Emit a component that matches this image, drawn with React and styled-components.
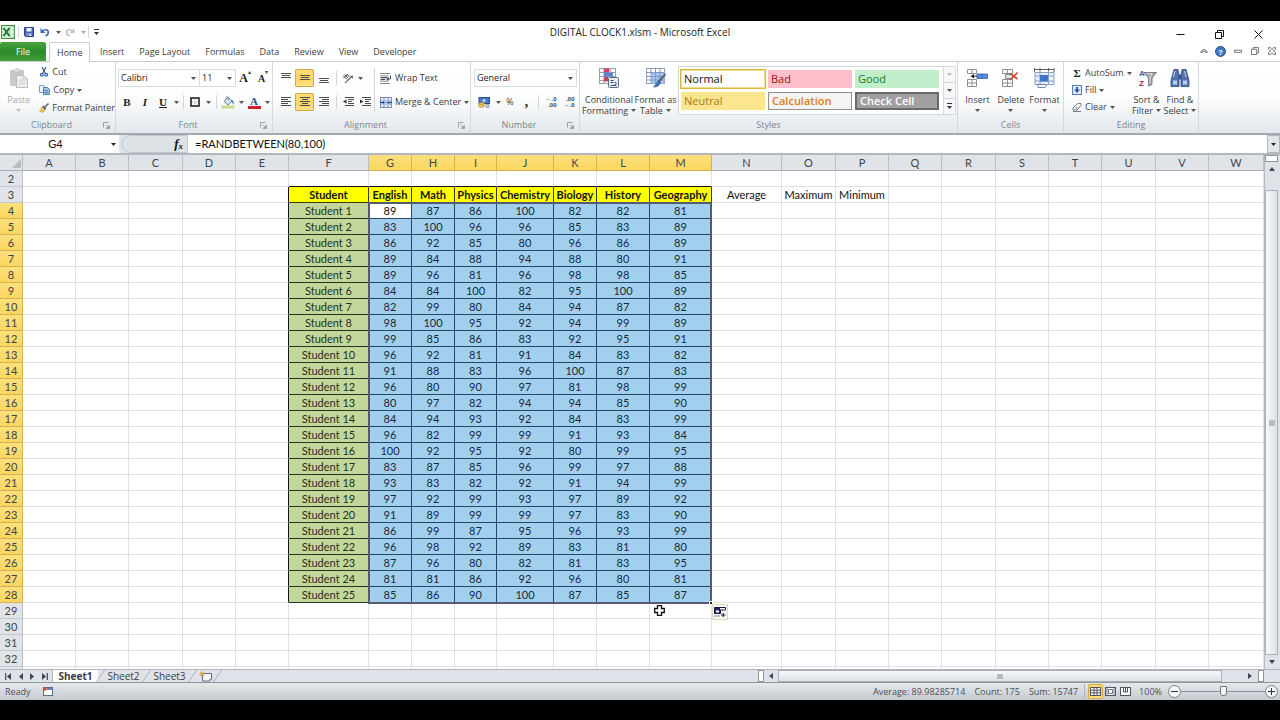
import { Fragment, useState } from "react";
import styled, { createGlobalStyle, css } from "styled-components";

const UI_FONT = '"Open Sans", "Noto Sans", sans-serif';
const CELL_FONT = 'Lato, "Liberation Sans", sans-serif';

const MENU_TABS = [
  "Insert",
  "Page Layout",
  "Formulas",
  "Data",
  "Review",
  "View",
  "Developer",
];

// the last column has no width, it takes what is left of the window
const COLUMNS = [
  ["A", 53],
  ["B", 53],
  ["C", 54],
  ["D", 53],
  ["E", 53],
  ["F", 80],
  ["G", 43],
  ["H", 43],
  ["I", 42],
  ["J", 57],
  ["K", 43],
  ["L", 53],
  ["M", 62],
  ["N", 70],
  ["O", 54],
  ["P", 53],
  ["Q", 53],
  ["R", 54],
  ["S", 53],
  ["T", 53],
  ["U", 54],
  ["V", 53],
  ["W", null],
];

const SUBJECTS = [
  "Student",
  "English",
  "Math",
  "Physics",
  "Chemistry",
  "Biology",
  "History",
  "Geography",
];

const SCORES = [
  [89, 87, 86, 100, 82, 82, 81],
  [83, 100, 96, 96, 85, 83, 89],
  [86, 92, 85, 80, 96, 86, 89],
  [89, 84, 88, 94, 88, 80, 91],
  [89, 96, 81, 96, 98, 98, 85],
  [84, 84, 100, 82, 95, 100, 89],
  [82, 99, 80, 84, 94, 87, 82],
  [98, 100, 95, 92, 94, 99, 89],
  [99, 85, 86, 83, 92, 95, 91],
  [96, 92, 81, 91, 84, 83, 82],
  [91, 88, 83, 96, 100, 87, 83],
  [96, 80, 90, 97, 81, 98, 99],
  [80, 97, 82, 94, 94, 85, 90],
  [84, 94, 93, 92, 84, 83, 99],
  [96, 82, 99, 99, 91, 93, 84],
  [100, 92, 95, 92, 80, 99, 95],
  [83, 87, 85, 96, 99, 97, 88],
  [93, 83, 82, 92, 91, 94, 99],
  [97, 92, 99, 93, 97, 89, 92],
  [91, 89, 99, 99, 97, 83, 90],
  [86, 99, 87, 95, 96, 93, 99],
  [96, 98, 92, 89, 83, 81, 80],
  [87, 96, 80, 82, 81, 83, 95],
  [81, 81, 86, 92, 96, 80, 81],
  [85, 86, 90, 100, 87, 85, 87],
];

const EXTRA_HEADERS = { 13: "Average", 14: "Maximum", 15: "Minimum" };
const ROWS = Array.from({ length: 32 }, (_, i) => i + 2);

const getCell = (row, col) => {
  if (row === 3) {
    if (col >= 5 && col <= 12) return { kind: "head", text: SUBJECTS[col - 5] };
    return { kind: col === 4 ? "edge" : "plain", text: EXTRA_HEADERS[col] };
  }
  if (row >= 4 && row <= 28) {
    if (col === 5) return { kind: "student", text: `Student ${row - 3}` };
    if (col >= 6 && col <= 12)
      return {
        kind: row === 4 && col === 6 ? "active" : "score",
        text: SCORES[row - 4][col - 6],
      };
    if (col === 4) return { kind: "edge" };
  }
  if (row === 2 && col >= 5 && col <= 12) return { kind: "above" };
  return { kind: "plain" };
};

/* ---------- icons ---------- */

const Caret = ({ color = "#555" }) => (
  <svg width="5" height="3" viewBox="0 0 5 3">
    <path d="M0 0h5L2.5 3z" fill={color} />
  </svg>
);

const ExcelIcon = () => (
  <svg width="14" height="14" viewBox="0 0 14 14">
    <rect x=".5" y=".5" width="13" height="13" fill="#d5edcf" stroke="#3d9140" />
    <path d="M9 2h4v10H9z" fill="#fff" stroke="#7db87c" strokeWidth=".6" />
    <path d="M9.5 4.5H13M9.5 7H13M9.5 9.500H13" stroke="#7db87c" strokeWidth=".6" />
    <path d="M2.500 3l6 8M8.500 3l-6 8" stroke="#1f7a2d" strokeWidth="2" />
  </svg>
);

const SaveIcon = () => (
  <svg width="10" height="10" viewBox="0 0 10 10">
    <path d="M.5.5h9v9h-8l-1-1z" fill="#4a63b5" stroke="#2f4290" />
    <path d="M2.500 1h5v3.500h-5z" fill="#eef2fb" />
    <path d="M2.500 6.500h5V9h-5z" fill="#c9d3ea" />
    <path d="M3.500 7h1v2h-1z" fill="#2f4290" />
  </svg>
);

const UndoIcon = ({ flip, color }) => (
  <svg width="10" height="10" viewBox="0 0 10 10">
    <g transform={flip ? "matrix(-1 0 0 1 10 0)" : undefined}>
      <path d="M2 4.500C4.500 2 8.300 2.200 8.300 5.200 8.300 7.200 6.800 8.400 5.500 9" fill="none" stroke={color} strokeWidth="1.600" />
      <path d="M.5 1v5h5z" fill={color} />
    </g>
  </svg>
);

const CustomizeIcon = () => (
  <svg width="5" height="6" viewBox="0 0 5 6">
    <path d="M0 .5h5" stroke="#333" />
    <path d="M0 3h5L2.500 6z" fill="#333" />
  </svg>
);

const LauncherIcon = () => (
  <svg width="7" height="7" viewBox="0 0 7 7">
    <path d="M.5 5.500v-5h5" fill="none" stroke="#9aa1a9" />
    <path d="M6.500 3v3.500H3zM2.500 2.500l3 3" fill="#9aa1a9" stroke="#9aa1a9" strokeWidth=".8" />
  </svg>
);

const PasteIcon = () => (
  <svg width="20" height="20" viewBox="0 0 20 20">
    <rect x="1" y="2" width="14" height="16" rx="1" fill="#c9c9c9" />
    <path d="M4 4V2h2.500a1.500 1.500 0 013 0H12v2z" fill="#e5e5e5" stroke="#b0b0b0" strokeWidth=".7" />
    <path d="M7.500 7.500h7l4 3.500v8.500h-11z" fill="#efefef" stroke="#bcbcbc" />
    <path d="M14.500 7.500V11h4M9.500 12h7M9.500 14h7M9.500 16h7" fill="none" stroke="#c8c8c8" strokeWidth=".8" />
  </svg>
);

const CutIcon = () => (
  <svg width="10" height="10" viewBox="0 0 10 10">
    <path d="M3 0l3.500 6.500M7 0L3.500 6.500" stroke="#44597f" strokeWidth="1.200" />
    <circle cx="2.800" cy="7.800" r="1.400" fill="none" stroke="#2f62b5" strokeWidth="1.200" />
    <circle cx="7.200" cy="7.800" r="1.400" fill="none" stroke="#2f62b5" strokeWidth="1.200" />
  </svg>
);

const CopyIcon = () => (
  <svg width="11" height="10" viewBox="0 0 11 10">
    <path d="M.5.5h4l1.500 1.500v5.500H.5z" fill="#e9f0fb" stroke="#6f8fc4" strokeWidth=".9" />
    <path d="M4.500 2.500h4l2 2v5h-6z" fill="#a9c2ee" stroke="#4d70b4" strokeWidth=".9" />
    <path d="M5.500 5.500h3M5.500 7.500h4" stroke="#3c5fa6" strokeWidth=".8" />
  </svg>
);

const PainterIcon = () => (
  <svg width="10" height="10" viewBox="0 0 10 10">
    <path d="M9.500.5L6 4" stroke="#6a6a6a" strokeWidth="1.600" />
    <path d="M4.500 2.500l3 3-1.500 1.500-3-3z" fill="#555e74" />
    <path d="M3 4l3 3-2 2.500L.5 8C2 7 2 5.500 3 4z" fill="#efc964" stroke="#b08b30" strokeWidth=".6" />
  </svg>
);

const BordersIcon = () => (
  <svg width="10" height="10" viewBox="0 0 10 10">
    <rect x="1" y="1" width="8" height="8" fill="#fff" stroke="#222" strokeWidth="1.600" />
    <path d="M5 2v6M2 5h6" stroke="#aaa" strokeDasharray="1 1" />
  </svg>
);

const FillColorIcon = () => (
  <svg width="14" height="13" viewBox="0 0 14 13">
    <path d="M3 5.500L7 1.500l4 3.500-4 4z" fill="#dbe3ee" stroke="#63738b" strokeWidth=".9" />
    <path d="M5 4V1.500a1.300 1.300 0 012.500 0V4" fill="none" stroke="#63738b" strokeWidth=".8" />
    <path d="M11 4c2 1 2 3 1.500 4.500C11.500 7.500 11.500 6 10 5z" fill="#3b73c4" />
    <path d="M.5 9.500h13v3H.5z" fill="#c8dc8a" />
  </svg>
);

const Lines = ({ widths, align = "center", top = 0 }) => (
  <svg width="10" height="10" viewBox="0 0 10 10">
    {widths.map((w, i) => {
      const x = align === "left" ? 0 : align === "right" ? 10 - w : (10 - w) / 2;
      return (
        <rect key={i} x={x} y={top + i * 2} width={w} height="1" fill="#4c4c4c" />
      );
    })}
  </svg>
);

const OrientationIcon = () => (
  <svg width="12" height="11" viewBox="0 0 12 11">
    <path d="M1 2.500l4 4M2.500 1.500l4 4M4.500 1l3 3M1.500 5l4-3.500" stroke="#555" strokeWidth="1" />
    <path d="M3 10l7-6.500" stroke="#777" strokeWidth="1.200" />
    <path d="M11 2.500v3.500L7.500 3z" fill="#777" />
  </svg>
);

const IndentIcon = ({ right }) => (
  <svg width="11" height="10" viewBox="0 0 11 10">
    <path d="M2 .5h9M5 2.500h6M5 4.500h4M5 6.500h6M2 8.500h9" stroke="#4c4c4c" />
    <path d={right ? "M0 2.500v4l3.500-2z" : "M3.500 2.500v4L0 4.500z"} fill="#333" />
  </svg>
);

const WrapIcon = () => (
  <svg width="12" height="11" viewBox="0 0 12 11">
    <path d="M0 .5h10M0 10.500h10" stroke="#8b8b8b" />
    <path d="M0 2.500h8v6H0z" fill="#d2d9e3" stroke="#8e959f" strokeWidth=".6" />
    <path d="M1 4.500h6M1 6.500h4" stroke="#444" />
    <path d="M10.500 2.500V6H8" fill="none" stroke="#555" />
    <path d="M8.500 4v4L6.500 6z" fill="#444" />
  </svg>
);

const MergeIcon = () => (
  <svg width="12" height="11" viewBox="0 0 12 11">
    <rect x=".5" y=".5" width="11" height="10" fill="#e8eefa" stroke="#7c8db0" />
    <path d="M4 .5V3M8 .5V3M4 8v2.500M8 8v2.500" stroke="#7c8db0" />
    <rect x="1" y="3" width="10" height="5" fill="#a9c3ee" />
    <path d="M0 5.500h3.500M8.500 5.500H12" stroke="#24457f" />
    <path d="M3 4v3l2-1.500zM9 4v3L7 5.500z" fill="#24457f" />
  </svg>
);

const CurrencyIcon = () => (
  <svg width="12" height="11" viewBox="0 0 12 11">
    <rect x="1" y=".5" width="10.500" height="6" fill="#4f78c2" stroke="#2b4c90" />
    <circle cx="6" cy="3.500" r="1.600" fill="#c6d6f2" />
    <ellipse cx="3.500" cy="7" rx="3" ry="1.300" fill="#f1cf62" stroke="#a98321" strokeWidth=".6" />
    <ellipse cx="3.500" cy="9" rx="3" ry="1.300" fill="#f1cf62" stroke="#a98321" strokeWidth=".6" />
    <path d="M8 7.500h3v3H8z" fill="#cfd8e8" stroke="#66779b" strokeWidth=".6" />
  </svg>
);

const ConditionalIcon = () => (
  <svg width="20" height="20" viewBox="0 0 20 20">
    <rect x=".5" y=".5" width="16" height="15" fill="#fff" stroke="#8fa0bb" />
    <path d="M.5 4.500h16M.5 8.500h16M.5 12.500h16M5 .5v15M11.500.5v15" stroke="#8fa0bb" />
    <path d="M5 .5h5v4H5zM5 8.500h4v5H5z" fill="#d2405c" />
    <path d="M5 4.500h9v4H5z" fill="#5b83cf" />
    <path d="M10 .5h1.500v4H10z" fill="#f3b5c0" />
    <rect x="9.500" y="9.500" width="10" height="10" rx="1" fill="#e9edf5" stroke="#5e6c87" />
    <path d="M11.500 12.500h3M11.500 14.500h3M15.500 14l2 1.500-2 1.500M11.500 17.500h6" fill="none" stroke="#3c4a66" />
  </svg>
);

const FormatTableIcon = () => (
  <svg width="20" height="20" viewBox="0 0 20 20">
    <rect x=".5" y=".5" width="18" height="15" fill="#fff" stroke="#8fa0bb" />
    <path d="M5 4.500h13.500v11H5z" fill="#a8c4f0" />
    <path d="M.5 4.500h18M.5 8.500h18M.5 12h18M5 .5v15M9.500.5v15M14 .5v15" stroke="#7f98c4" />
    <path d="M19.500 6L12 14.500" stroke="#5c6470" strokeWidth="2" />
    <path d="M12.500 12.500l2 2c-1 3-3 4.500-7 4.500 2.500-1.500 2-4 5-6.500z" fill="#4173bd" stroke="#2b528f" strokeWidth=".6" />
  </svg>
);

const InsertIcon = () => (
  <svg width="21" height="20" viewBox="0 0 21 20">
    <path d="M.5 1.500h9v4h-9zM5 1.500v4M.5 11.500h9v7h-9zM5 11.500v7M.5 15h9" fill="#fff" stroke="#8a8f98" />
    <path d="M10 6h10.500v4.500H10z" fill="#5b8ae0" stroke="#3358a6" strokeWidth=".8" />
    <path d="M15 6v4.500" stroke="#3358a6" strokeWidth=".6" />
    <path d="M5 8.200h5" stroke="#222" />
    <path d="M3.500 8.200L7 6v4.400z" fill="#222" />
  </svg>
);

const DeleteIcon = () => (
  <svg width="20" height="20" viewBox="0 0 20 20">
    <path d="M1.500 1.500h10v4h-10zM6.500 1.500v4M1.500 11.500h10v7h-10zM6.500 11.500v7M1.500 15h10" fill="#fff" stroke="#8a8f98" />
    <path d="M4.500 6.500h7v4h-7z" fill="#dfe4ec" stroke="#8a8f98" />
    <path d="M9 5.500l7.500 5.500M16.500 4.500L9 12" stroke="#cf4b32" strokeWidth="1.700" />
  </svg>
);

const FormatIcon = () => (
  <svg width="21" height="20" viewBox="0 0 21 20">
    <path d="M.5 0v4M20 0v4M1 1.500h19M6 0v3.500M14.500 0v3.500" stroke="#5b6470" />
    <path d="M1 4.500h19v12H1z" fill="#e7effb" stroke="#8aa0c4" />
    <path d="M6 4.500v12M14.500 4.500v12M1 8h19M1 13h19" stroke="#8aa0c4" />
    <path d="M6 7h8v6.500H6z" fill="#3f74c8" />
    <path d="M4 16.500h7l1.500 1.500L11 19.500H4z" fill="#fff" stroke="#6a86b8" />
  </svg>
);

const FillIcon = () => (
  <svg width="10" height="10" viewBox="0 0 10 10">
    <rect x=".5" y=".5" width="9" height="9" fill="#dfe9fa" stroke="#5a7dbd" />
    <path d="M4 2h2v2.500h2L5 8 2 4.500h2z" fill="#2a5bb0" />
  </svg>
);

const ClearIcon = () => (
  <svg width="10" height="10" viewBox="0 0 10 10">
    <path d="M1 6l4.500-4.500h3.500v2L5 8H1z" fill="#f2f4f8" stroke="#68707f" strokeWidth=".9" />
    <path d="M4 5l1.500 2.500M1 9.500h8" stroke="#68707f" strokeWidth=".9" />
  </svg>
);

const SortIcon = () => (
  <svg width="20" height="20" viewBox="0 0 20 20">
    <path d="M7 4.500h12.500L15 10v6.500L11.500 18v-8z" fill="#a3a8ae" stroke="#666c74" strokeWidth=".8" />
    <path d="M10 5.500h5L13 9.500v6" fill="none" stroke="#dcdfe3" />
    <text x="2" y="8" fontFamily="Liberation Sans, sans-serif" fontWeight="700" fontSize="8" fill="#3a62ad">A</text>
    <text x="2" y="18" fontFamily="Liberation Sans, sans-serif" fontWeight="700" fontSize="8" fill="#a3293a">Z</text>
  </svg>
);

const FindIcon = () => (
  <svg width="20" height="20" viewBox="0 0 20 20">
    <path d="M4 1.500h4l1 5v12H1v-6z" fill="#5273ae" stroke="#2c4479" strokeWidth=".8" />
    <path d="M12 1.500h4l3 11v6h-8v-12z" fill="#5273ae" stroke="#2c4479" strokeWidth=".8" />
    <path d="M8.500 6.500h3v5h-3z" fill="#3b568f" />
    <path d="M3 12.500h4v4H3zM13 12.500h4v4h-4z" fill="#b9cdef" />
    <path d="M5 3L3.500 9M14.500 3l1.500 6" stroke="#c4d3ee" />
  </svg>
);

const FrameIcon = ({ name, size = 9, color = "#666" }) => {
  const paths = {
    min: "M.5 4.500h8",
    restore: "M.5 2.500h6v6h-6zM2.500 2.500v-2h6v6h-2",
    close: "M.5.5l8 8M8.500.5l-8 8",
    up: "M1 5l3.500-2.500L8 5v1.500L4.500 4.500 1 6.500z",
    bar: "M.5 3.500h8v2.500h-8z",
    cross: "M.5.5h2l2 2.500 2-2.500h2v2L6 4.500l2.500 2v2h-2l-2-2-2 2h-2v-2l2.500-2-2.500-2z",
  };
  return (
    <svg width={size} height={size} viewBox="0 0 9 9">
      <path d={paths[name]} fill="none" stroke={color} strokeWidth="1" />
    </svg>
  );
};

const HelpIcon = () => (
  <svg width="11" height="11" viewBox="0 0 11 11">
    <circle cx="5.500" cy="5.500" r="5" fill="#3d74c4" stroke="#2a569b" />
    <text x="5.500" y="8.500" textAnchor="middle" fontFamily="Liberation Sans, sans-serif" fontWeight="700" fontSize="8" fill="#fff">?</text>
  </svg>
);

const NavIcon = ({ dir, stop }) => (
  <svg width="7" height="7" viewBox="0 0 7 7">
    <g transform={dir === "left" ? "matrix(-1 0 0 1 7 0)" : undefined}>
      <path d="M1 0v7l4-3.500z" fill="#3f4650" />
      {stop ? <path d="M6.300 0v7" stroke="#3f4650" strokeWidth="1.200" /> : null}
    </g>
  </svg>
);

const ArrowIcon = ({ dir }) => {
  const turn = { up: 0, right: 90, down: 180, left: 270 }[dir];
  return (
    <svg width="8" height="8" viewBox="0 0 8 8">
      <path d="M1 6h6L4 2z" fill="#3f4650" transform={`rotate(${turn} 4 4)`} />
    </svg>
  );
};

const NewSheetIcon = () => (
  <svg width="13" height="11" viewBox="0 0 13 11">
    <path d="M3.500 2.500h9v5.500l-2 2h-7z" fill="#f4f7fc" stroke="#5b6d93" />
    <path d="M12.500 8h-2v2z" fill="#5b6d93" />
    <path d="M3 0v6M0 3h6M1 1l4 4M5 1L1 5" stroke="#d8a53a" strokeWidth=".9" />
  </svg>
);

const MacroIcon = () => (
  <svg width="10" height="9" viewBox="0 0 10 9">
    <rect x=".5" y=".5" width="9" height="8" fill="#fff" stroke="#5d6b91" />
    <path d="M4 1h5.500v2H4z" fill="#6b83bd" />
    <circle cx="2" cy="2" r="1.800" fill="#c94545" />
  </svg>
);

const ViewIcon = ({ name }) => (
  <svg width="11" height="9" viewBox="0 0 11 9">
    <rect x=".5" y=".5" width="10" height="8" fill="#fff" stroke="#4f5660" />
    {name === "normal" ? (
      <path d="M.5 3.200h10M.5 5.800h10M4 .5v8M7 .5v8" stroke="#4f5660" />
    ) : null}
    {name === "page" ? (
      <path d="M3.500 2.500h4v4h-4zM2 .5v8M9 .5v8" fill="none" stroke="#6d747e" />
    ) : null}
    {name === "break" ? (
      <path d="M3.500.5V5h4V.5M5.500.5V5" fill="none" stroke="#4f5660" />
    ) : null}
  </svg>
);

const AutoFillIcon = () => (
  <svg width="12" height="12" viewBox="0 0 12 12">
    <path d="M.5 1.500h6v6h-6z" fill="#26266e" stroke="#15154d" />
    <path d="M2 4.500h3v2H2z" fill="#fff" />
    <path d="M5.500 1.500h6v2.500h-6z" fill="#fff" stroke="#15154d" />
    <path d="M.5 10h6" stroke="#15154d" strokeDasharray="1 1" />
    <path d="M7 9h4.500M9.200 6.800v4.400" stroke="#15154d" />
  </svg>
);

const CrossCursor = () => (
  <svg width="11" height="11" viewBox="0 0 11 11">
    <path d="M3.500.700h4v2.800h2.800v4H7.500v2.800h-4V7.500H.700v-4h2.800z" fill="#fff" stroke="#111" strokeWidth="1.300" />
  </svg>
);

/* ---------- parts ---------- */

const BigTool = ({ icon, lines, width, muted, caretBelow }) => (
  <BigButton $width={width} $muted={muted}>
    {icon}
    <BigLabel>
      {lines.map((line, i) => (
        <BigLine key={line}>
          {line}
          {!caretBelow && i === lines.length - 1 ? <Caret /> : null}
        </BigLine>
      ))}
      {caretBelow ? (
        <BigLine>
          <Caret color={muted ? "#bbb" : "#555"} />
        </BigLine>
      ) : null}
    </BigLabel>
  </BigButton>
);

const Combo = ({ label, value, width }) => (
  <ComboBox $width={width}>
    <select aria-label={label} defaultValue={value}>
      <option>{value}</option>
    </select>
    <Caret />
  </ComboBox>
);

const Group = ({ title, width, launcher, pad, children }) => (
  <GroupBox $width={width}>
    <GroupBody $pad={pad}>{children}</GroupBody>
    <GroupTitle>
      <span>{title}</span>
      {launcher ? (
        <Launcher aria-label={`${title} settings`}>
          <LauncherIcon />
        </Launcher>
      ) : null}
    </GroupTitle>
  </GroupBox>
);

const TitleBar = () => (
  <TitleRow>
    <QuickAccess>
      <ExcelIcon />
      <Divider $h={12} $mx={3} />
      <Tool $w={14} aria-label="Save">
        <SaveIcon />
      </Tool>
      <Tool $w={18} aria-label="Undo">
        <UndoIcon color="#3c6db8" />
      </Tool>
      <Tool $w={8} aria-label="Undo list">
        <Caret />
      </Tool>
      <Tool $w={16} aria-label="Redo">
        <UndoIcon flip color="#bfc3c9" />
      </Tool>
      <Tool $w={10} aria-label="Redo list">
        <Caret color="#aaa" />
      </Tool>
      <Divider $h={12} $mx={0} />
      <Tool $w={14} aria-label="Customize toolbar">
        <CustomizeIcon />
      </Tool>
    </QuickAccess>
    <WindowTitle>DIGITAL CLOCK1.xlsm - Microsoft Excel</WindowTitle>
    <WindowButtons>
      <Tool $w={39} aria-label="Minimize">
        <FrameIcon name="min" color="#111" />
      </Tool>
      <Tool $w={39} aria-label="Restore">
        <FrameIcon name="restore" color="#111" />
      </Tool>
      <Tool $w={39} aria-label="Close">
        <FrameIcon name="close" color="#111" />
      </Tool>
    </WindowButtons>
  </TitleRow>
);

const MenuBar = () => (
  <MenuRow>
    <FileTab>File</FileTab>
    <HomeTab>Home</HomeTab>
    {MENU_TABS.map((tab) => (
      <MenuTab key={tab}>{tab}</MenuTab>
    ))}
    <BookButtons>
      <Tool $w={17} aria-label="Collapse ribbon">
        <FrameIcon name="up" size={8} />
      </Tool>
      <Tool $w={17} aria-label="Help">
        <HelpIcon />
      </Tool>
      <Tool $w={17} aria-label="Minimize workbook">
        <FrameIcon name="bar" size={8} />
      </Tool>
      <Tool $w={17} aria-label="Restore workbook">
        <FrameIcon name="restore" size={8} />
      </Tool>
      <Tool $w={17} aria-label="Close workbook">
        <FrameIcon name="cross" size={8} />
      </Tool>
    </BookButtons>
  </MenuRow>
);

const Ribbon = () => (
  <RibbonRow>
    <Group title="Clipboard" width={116} launcher>
      <BigTool icon={<PasteIcon />} lines={["Paste"]} width={38} muted caretBelow />
      <Stack $row={18}>
        <SmallTool>
          <CutIcon />
          Cut
        </SmallTool>
        <SmallTool>
          <CopyIcon />
          Copy <Caret />
        </SmallTool>
        <SmallTool>
          <PainterIcon />
          Format Painter
        </SmallTool>
      </Stack>
    </Group>

    <Group title="Font" width={157} launcher pad={2}>
      <Stack $row={24}>
        <ToolRow>
          <Combo label="Font" value="Calibri" width={82} />
          <Combo label="Font size" value="11" width={36} />
          <Tool $w={18} aria-label="Grow font">
            <Letter $size={12}>A</Letter>
            <Mark>▴</Mark>
          </Tool>
          <Tool $w={18} aria-label="Shrink font">
            <Letter $size={10}>A</Letter>
            <Mark>▾</Mark>
          </Tool>
        </ToolRow>
        <ToolRow>
          <Tool $w={18} aria-label="Bold">
            <Letter>B</Letter>
          </Tool>
          <Tool $w={18} aria-label="Italic">
            <Letter $italic>I</Letter>
          </Tool>
          <Tool $w={18} aria-label="Underline">
            <Letter $underline>U</Letter>
          </Tool>
          <Tool $w={8} aria-label="Underline style">
            <Caret />
          </Tool>
          <Divider $h={14} $mx={3} />
          <Tool $w={16} aria-label="Borders">
            <BordersIcon />
          </Tool>
          <Tool $w={10} aria-label="Border styles">
            <Caret />
          </Tool>
          <Divider $h={14} $mx={3} />
          <Tool $w={16} aria-label="Fill color">
            <FillColorIcon />
          </Tool>
          <Tool $w={10} aria-label="Fill colors">
            <Caret />
          </Tool>
          <Tool $w={16} aria-label="Font color">
            <ColorLetter>A</ColorLetter>
          </Tool>
          <Tool $w={10} aria-label="Font colors">
            <Caret />
          </Tool>
        </ToolRow>
      </Stack>
    </Group>

    <Group title="Alignment" width={198} launcher pad={3}>
      <Stack $row={24}>
        <ToolRow>
          <Tool $w={19} aria-label="Top align">
            <Lines widths={[10, 8, 10]} />
          </Tool>
          <Tool $w={19} $on aria-label="Middle align">
            <Lines widths={[10, 8, 10]} top={2} />
          </Tool>
          <Tool $w={19} aria-label="Bottom align">
            <Lines widths={[10, 8, 10]} top={5} />
          </Tool>
          <Divider $h={14} $mx={3} />
          <Tool $w={16} aria-label="Orientation">
            <OrientationIcon />
          </Tool>
          <Tool $w={8} aria-label="Orientation list">
            <Caret />
          </Tool>
        </ToolRow>
        <ToolRow>
          <Tool $w={19} aria-label="Align left">
            <Lines widths={[10, 7, 10, 7, 10]} align="left" />
          </Tool>
          <Tool $w={19} $on aria-label="Center">
            <Lines widths={[10, 6, 10, 6, 10]} />
          </Tool>
          <Tool $w={19} aria-label="Align right">
            <Lines widths={[10, 7, 10, 7, 10]} align="right" />
          </Tool>
          <Divider $h={14} $mx={3} />
          <Tool $w={17} aria-label="Decrease indent">
            <IndentIcon />
          </Tool>
          <Tool $w={17} aria-label="Increase indent">
            <IndentIcon right />
          </Tool>
        </ToolRow>
      </Stack>
      <Divider $h={44} $mx={0} />
      <Stack $row={24}>
        <SmallTool $pad={5}>
          <WrapIcon />
          Wrap Text
        </SmallTool>
        <SmallTool $pad={5}>
          <MergeIcon />
          Merge &amp; Center <Caret />
        </SmallTool>
      </Stack>
    </Group>

    <Group title="Number" width={109} launcher pad={3}>
      <Stack $row={24}>
        <ToolRow>
          <Combo label="Number format" value="General" width={103} />
        </ToolRow>
        <ToolRow>
          <Tool $w={20} aria-label="Accounting format">
            <CurrencyIcon />
          </Tool>
          <Tool $w={8} aria-label="Currencies">
            <Caret />
          </Tool>
          <Tool $w={16} aria-label="Percent">
            %
          </Tool>
          <Tool $w={17} aria-label="Comma style">
            <Letter $size={14}>,</Letter>
          </Tool>
          <Divider $h={14} $mx={3} />
          <Tool $w={18} aria-label="Increase decimal">
            <Decimals>
              <span>←.0</span>
              <span>.00</span>
            </Decimals>
          </Tool>
          <Tool $w={18} aria-label="Decrease decimal">
            <Decimals>
              <span>.00</span>
              <span>→.0</span>
            </Decimals>
          </Tool>
        </ToolRow>
      </Stack>
    </Group>

    <Group title="Styles" width={378} pad={5}>
      <BigTool
        icon={<ConditionalIcon />}
        lines={["Conditional", "Formatting"]}
        width={48}
      />
      <BigTool
        icon={<FormatTableIcon />}
        lines={["Format as", "Table"]}
        width={45}
      />
      <Gallery>
        <StyleGrid>
          <StyleItem $kind="normal">Normal</StyleItem>
          <StyleItem $kind="bad">Bad</StyleItem>
          <StyleItem $kind="good">Good</StyleItem>
          <StyleItem $kind="neutral">Neutral</StyleItem>
          <StyleItem $kind="calculation">Calculation</StyleItem>
          <StyleItem $kind="check">Check Cell</StyleItem>
        </StyleGrid>
        <GalleryScroll>
          <Tool $w={11} aria-label="Previous styles">
            <Caret color="#bbb" />
          </Tool>
          <Tool $w={11} aria-label="Next styles">
            <Caret />
          </Tool>
          <Tool $w={11} aria-label="More styles">
            <CustomizeIcon />
          </Tool>
        </GalleryScroll>
      </Gallery>
    </Group>

    <Group title="Cells" width={106} pad={3}>
      <BigTool icon={<InsertIcon />} lines={["Insert"]} width={33} caretBelow />
      <BigTool icon={<DeleteIcon />} lines={["Delete"]} width={34} caretBelow />
      <BigTool icon={<FormatIcon />} lines={["Format"]} width={33} caretBelow />
    </Group>

    <Group title="Editing" width={135} pad={6}>
      <EditStack $row={17}>
        <SmallTool>
          <Sigma>Σ</Sigma>
          AutoSum <Caret />
        </SmallTool>
        <SmallTool>
          <FillIcon />
          Fill <Caret />
        </SmallTool>
        <SmallTool>
          <ClearIcon />
          Clear <Caret />
        </SmallTool>
      </EditStack>
      <BigTool icon={<SortIcon />} lines={["Sort &", "Filter"]} width={33} />
      <BigTool icon={<FindIcon />} lines={["Find &", "Select"]} width={34} />
    </Group>
  </RibbonRow>
);

const FormulaBar = () => (
  <FormulaRow>
    <NameBox>
      <input aria-label="Name box" defaultValue="G4" />
      <Caret color="#222" />
    </NameBox>
    <FxArea>
      <i>f</i>
      <small>x</small>
    </FxArea>
    <FormulaInput aria-label="Formula" defaultValue="=RANDBETWEEN(80,100)" />
    <ExpandButton aria-label="Expand formula bar">
      <Caret color="#222" />
    </ExpandButton>
  </FormulaRow>
);

const Grid = () => (
  <SheetArea>
    <SheetTable>
      <colgroup>
        <Col $w={23} />
        {COLUMNS.map(([name, width]) => (
          <Col key={name} $w={width} />
        ))}
      </colgroup>
      <thead>
        <tr>
          <HeadCell as="td">
            <svg width="9" height="9" viewBox="0 0 9 9">
              <path d="M9 0v9H0z" fill="#b6bcc4" />
            </svg>
          </HeadCell>
          {COLUMNS.map(([name], i) => (
            <HeadCell key={name} $on={i >= 6 && i <= 12}>
              {name}
            </HeadCell>
          ))}
        </tr>
      </thead>
      <tbody>
        {ROWS.map((row) => (
          <tr key={row}>
            <HeadCell $row $on={row >= 4 && row <= 28}>
              {row < 33 ? row : null}
            </HeadCell>
            {COLUMNS.map(([name], col) => {
              const { kind, text } = getCell(row, col);
              return (
                <Cell key={name} $kind={kind}>
                  {text}
                </Cell>
              );
            })}
          </tr>
        ))}
      </tbody>
    </SheetTable>
    <Selection>
      <FillHandle />
      <AutoFill aria-label="Auto fill options">
        <AutoFillIcon />
      </AutoFill>
    </Selection>
    <Pointer>
      <CrossCursor />
    </Pointer>
  </SheetArea>
);

const SheetBar = () => {
  const [active, setActive] = useState("Sheet1");
  return (
    <SheetRow>
      <SheetNav>
        <Tool $w={12} aria-label="First sheet">
          <NavIcon dir="left" stop />
        </Tool>
        <Tool $w={12} aria-label="Previous sheet">
          <NavIcon dir="left" />
        </Tool>
        <Tool $w={12} aria-label="Next sheet">
          <NavIcon dir="right" />
        </Tool>
        <Tool $w={12} aria-label="Last sheet">
          <NavIcon dir="right" stop />
        </Tool>
      </SheetNav>
      {["Sheet1", "Sheet2", "Sheet3"].map((sheet) => (
        <Fragment key={sheet}>
          <SheetTab $on={sheet === active} onClick={() => setActive(sheet)}>
            {sheet}
          </SheetTab>
          <Slash />
        </Fragment>
      ))}
      <Tool $w={20} aria-label="Insert worksheet">
        <NewSheetIcon />
      </Tool>
      <Slash />
      <HScroll>
        <Splitter />
        <Tool $w={14} aria-label="Scroll left">
          <ArrowIcon dir="left" />
        </Tool>
        <HTrack>
          <HThumb>
            <Grip />
          </HThumb>
        </HTrack>
        <Tool $w={16} aria-label="Scroll right">
          <ArrowIcon dir="right" />
        </Tool>
        <Splitter />
      </HScroll>
    </SheetRow>
  );
};

const StatusBar = () => (
  <StatusRow>
    <StatusText>Ready</StatusText>
    <Divider $h={12} $mx={4} />
    <Tool $w={16} aria-label="Record macro">
      <MacroIcon />
    </Tool>
    <Divider $h={12} $mx={4} />
    <StatusRight>
      <Stats>
        <StatusText>Average: 89.98285714</StatusText>
        <StatusText>Count: 175</StatusText>
        <StatusText>Sum: 15747</StatusText>
      </Stats>
      <Views>
        <Tool $w={15} $on aria-label="Normal view">
          <ViewIcon name="normal" />
        </Tool>
        <Tool $w={15} aria-label="Page layout view">
          <ViewIcon name="page" />
        </Tool>
        <Tool $w={15} aria-label="Page break view">
          <ViewIcon name="break" />
        </Tool>
      </Views>
      <StatusText>100%</StatusText>
      <ZoomBox>
        <RoundButton aria-label="Zoom out">
          <svg width="7" height="7" viewBox="0 0 7 7">
            <path d="M0 3.500h7" stroke="#333" />
          </svg>
        </RoundButton>
        <ZoomSlider type="range" min="0" max="100" defaultValue="50" aria-label="Zoom" />
        <RoundButton aria-label="Zoom in">
          <svg width="7" height="7" viewBox="0 0 7 7">
            <path d="M0 3.500h7M3.500 0v7" stroke="#333" />
          </svg>
        </RoundButton>
      </ZoomBox>
    </StatusRight>
  </StatusRow>
);

const App = () => (
  <Screen>
    <GlobalStyle />
    <TitleBar />
    <MenuBar />
    <Ribbon />
    <FormulaBar />
    <Main>
      <Grid />
      <VScroll>
        <VSplit />
        <VButton aria-label="Scroll up">
          <ArrowIcon dir="up" />
        </VButton>
        <VTrack>
          <VThumb>
            <Grip $tall />
          </VThumb>
        </VTrack>
        <VButton aria-label="Scroll down">
          <ArrowIcon dir="down" />
        </VButton>
      </VScroll>
    </Main>
    <SheetBar />
    <StatusBar />
  </Screen>
);

export default App;

//styles
const GlobalStyle = createGlobalStyle`
  * {
    box-sizing: border-box;
  }
  body {
    margin: 0;
    background: #000;
  }
  button, input, select {
    font: inherit;
    color: inherit;
    margin: 0;
    padding: 0;
    border: 0;
    background: none;
    border-radius: 0;
  }
  svg {
    display: block;
    flex: none;
  }
`;

const Screen = styled.div`
  display: flex;
  flex-direction: column;
  height: 100vh;
  padding: 21px 0 20px;
  background: #000;
  color: #3d3d3d;
  font: 9px/12px ${UI_FONT};
  overflow: hidden;
`;

const TitleRow = styled.header`
  display: grid;
  grid-template-columns: 1fr auto 1fr;
  align-items: center;
  height: 21px;
  padding-bottom: 2px;
  background: #fff;
`;
const QuickAccess = styled.div`
  display: flex;
  align-items: center;
  padding-left: 1px;
`;
const WindowTitle = styled.h1`
  margin: 0;
  font-size: 10px;
  font-weight: 400;
  color: #222;
`;
const WindowButtons = styled.div`
  display: flex;
  justify-content: flex-end;
  padding-top: 4px;
  padding-right: 2px;
`;

const Tool = styled.button`
  display: flex;
  align-items: center;
  justify-content: center;
  flex: none;
  width: ${({ $w }) => $w}px;
  height: 18px;
  ${({ $on }) =>
    $on &&
    css`
      background: linear-gradient(#fbdf7d, #fbd561 50%, #fde58a);
      box-shadow: inset 0 0 0 1px #d3a93d;
      border-radius: 2px;
    `}
`;
const Divider = styled.span`
  flex: none;
  width: 1px;
  height: ${({ $h }) => $h}px;
  margin: 0 ${({ $mx }) => $mx}px;
  background: #d3d6da;
`;

const MenuRow = styled.nav`
  display: flex;
  align-items: stretch;
  gap: 1px;
  height: 20px;
  background: #fff;
  border-bottom: 1px solid #c9cdd2;
`;
const MenuTab = styled.button`
  padding: 0 7px;
  white-space: nowrap;
`;
const FileTab = styled(MenuTab)`
  width: 46px;
  margin-right: 2px;
  color: #fff;
  background: linear-gradient(#4aa53f, #2d8a2b 50%, #43a139);
  border-radius: 2px 2px 0 0;
`;
const HomeTab = styled(MenuTab)`
  width: 41px;
  margin-right: 2px;
  margin-bottom: -1px;
  background: #fff;
  border: 1px solid #c9cdd2;
  border-bottom: 0;
  border-radius: 2px 2px 0 0;
`;
const BookButtons = styled.div`
  display: flex;
  margin-left: auto;
`;

const RibbonRow = styled.section`
  display: flex;
  height: 73px;
  flex: none;
  background: linear-gradient(#fff, #fcfdfd 50%, #e3e7eb);
  border-bottom: 2px solid #a3a8ae;
`;
const GroupBox = styled.div`
  display: flex;
  flex-direction: column;
  flex: none;
  width: ${({ $width }) => $width}px;
  border-right: 1px solid #d5d9dd;
`;
const GroupBody = styled.div`
  display: flex;
  align-items: center;
  height: 56px;
  padding-left: ${({ $pad }) => $pad || 0}px;
`;
const GroupTitle = styled.div`
  display: flex;
  align-items: center;
  height: 14px;
  color: #7d858e;

  span {
    flex: 1;
    text-align: center;
  }
`;
const Launcher = styled.button`
  width: 12px;
  height: 12px;
`;

const BigButton = styled.button`
  display: flex;
  flex-direction: column;
  align-items: center;
  align-self: stretch;
  gap: 6px;
  width: ${({ $width }) => $width}px;
  padding-top: 6px;
  color: ${({ $muted }) => ($muted ? "#a9a9a9" : "inherit")};
`;
const BigLabel = styled.span`
  display: flex;
  flex-direction: column;
  align-items: center;
`;
const BigLine = styled.span`
  display: flex;
  align-items: center;
  gap: 3px;
  height: 11px;
  line-height: 11px;
  white-space: nowrap;
`;

const Stack = styled.div`
  display: grid;
  grid-auto-rows: ${({ $row }) => $row}px;
  align-items: center;
`;
const EditStack = styled(Stack)`
  width: 60px;
`;
const ToolRow = styled.div`
  display: flex;
  align-items: center;
`;
const SmallTool = styled.button`
  display: flex;
  align-items: center;
  gap: 3px;
  height: 17px;
  padding-left: ${({ $pad }) => $pad || 2}px;
  white-space: nowrap;
`;
const Letter = styled.span`
  font: ${({ $italic }) => ($italic ? "italic" : "normal")} bold
    ${({ $size }) => $size || 11}px "Liberation Serif", serif;
  text-decoration: ${({ $underline }) => ($underline ? "underline" : "none")};
  color: #222;
`;
const Mark = styled.sup`
  font-size: 6px;
  line-height: 6px;
  align-self: flex-start;
`;
const ColorLetter = styled(Letter)`
  width: 13px;
  line-height: 10px;
  color: #2f4f8f;
  border-bottom: 3px solid #d0202a;
`;
const Sigma = styled(Letter)`
  width: 10px;
  text-align: center;
`;
const Decimals = styled.span`
  display: flex;
  flex-direction: column;
  font: bold 6px/6px "Liberation Sans", sans-serif;
  text-align: right;
`;

const ComboBox = styled.div`
  display: flex;
  align-items: center;
  width: ${({ $width }) => $width}px;
  height: 18px;
  padding: 0 3px 0 2px;
  background: #fff;
  border: 1px solid #d9dce0;

  & + & {
    border-left: 0;
  }
  select {
    flex: 1;
    min-width: 0;
    appearance: none;
    color: #222;
    outline: 0;
  }
`;

const Gallery = styled.div`
  display: flex;
  flex: none;
  height: 49px;
  border: 1px solid #d5d9dd;
  background: #fff;
`;
const StyleGrid = styled.div`
  display: grid;
  grid-template-columns: repeat(3, 84px);
  grid-auto-rows: 18px;
  gap: 4px 3px;
  padding: 3px 4px 3px 2px;
`;

const styleKinds = {
  normal: css`
    color: #111;
    background: #fff;
    box-shadow: 0 0 0 1px #d9b63c, inset 0 0 0 1px #f3dc8c;
  `,
  bad: css`
    color: #9c1220;
    background: #ffc0cb;
  `,
  good: css`
    color: #1a7a1a;
    background: #c2efcb;
  `,
  neutral: css`
    color: #a8791a;
    background: #fbe58e;
  `,
  calculation: css`
    color: #e07a1c;
    font-weight: 600;
    background: #f4f4f4;
    border: 1px solid #8f8f8f;
  `,
  check: css`
    color: #fff;
    font-weight: 600;
    background: #a0a0a0;
    border: 2px solid #6a6a6a;
  `,
};
const StyleItem = styled.button`
  padding-left: 3px;
  font-size: 11px;
  line-height: 14px;
  text-align: left;
  ${({ $kind }) => styleKinds[$kind]}
`;
const GalleryScroll = styled.div`
  display: grid;
  grid-auto-rows: 1fr;
  border-left: 1px solid #d5d9dd;
  background: #f6f7f8;

  button {
    height: auto;
  }
  button + button {
    border-top: 1px solid #d5d9dd;
  }
`;

const FormulaRow = styled.div`
  display: flex;
  flex: none;
  height: 20px;
  background: #e2e6ea;
  border-bottom: 2px solid #b4b8be;
  font: 11px/16px ${CELL_FONT};
  color: #111;
`;
const NameBox = styled.div`
  display: flex;
  align-items: center;
  width: 119px;
  padding-right: 3px;
  background: #fff;

  input {
    flex: 1;
    min-width: 0;
    text-align: center;
  }
`;
const FxArea = styled.div`
  display: flex;
  align-items: center;
  justify-content: flex-end;
  width: 67px;
  margin-left: 2px;
  padding-right: 4px;
  background: #dde2e7;
  border: 1px solid #c1c6cc;
  border-radius: 9px 0 0 9px;
  font: bold 13px/16px "Liberation Serif", serif;

  small {
    font-size: 9px;
    font-style: italic;
    padding-top: 3px;
  }
`;
const FormulaInput = styled.input`
  flex: 1;
  min-width: 0;
  padding-left: 7px;
  background: #fff;
`;
const ExpandButton = styled.button`
  display: grid;
  place-items: center;
  width: 13px;
  background: #e2e6ea;
  border: 1px solid #b4b8be;
`;

const Main = styled.main`
  display: flex;
  flex: 1;
  min-height: 0;
  background: #fff;
`;
const SheetArea = styled.div`
  position: relative;
  flex: 1;
  min-width: 0;
  overflow: hidden;
`;
const SheetTable = styled.table`
  width: 100%;
  table-layout: fixed;
  border-collapse: separate;
  border-spacing: 0;
  font: 11px/15px ${CELL_FONT};
  color: #111;
`;
const Col = styled.col`
  width: ${({ $w }) => ($w ? `${$w}px` : "auto")};
`;
const HeadCell = styled.th`
  height: 16px;
  padding: 0;
  font-weight: 400;
  text-align: center;
  color: #3f444b;
  background: #e0e4e9;
  border-right: 1px solid #b9bfc6;
  border-bottom: 1px solid ${({ $row }) => ($row ? "#c3c8ce" : "#a9afb7")};
  ${({ $on }) =>
    $on &&
    css`
      background: linear-gradient(#fde07e, #fad65f);
      border-color: #d9b04c;
    `}

  svg {
    margin: 2px 1px 0 auto;
  }
`;

const cellKinds = {
  head: css`
    font-weight: 700;
    background: #ffff00;
    border-color: #3a3a10;
  `,
  student: css`
    color: #26301a;
    background: #c4d79b;
    border-color: #2b3320;
  `,
  score: css`
    color: #16283a;
    background: #a3cfef;
    border-color: #264868;
  `,
  active: css`
    background: #fff;
    border-color: #264868;
  `,
  edge: css`
    border-right-color: #111;
  `,
  above: css`
    border-bottom-color: #111;
  `,
};
const Cell = styled.td`
  height: 16px;
  padding: 0;
  text-align: center;
  white-space: nowrap;
  border-right: 1px solid #dfe1e4;
  border-bottom: 1px solid #dfe1e4;
  ${({ $kind }) => cellKinds[$kind]}
`;

const Selection = styled.div`
  position: absolute;
  left: 368px;
  top: 47px;
  width: 344px;
  height: 402px;
  border: 2px solid #565a70;
  pointer-events: none;
`;
const FillHandle = styled.span`
  position: absolute;
  right: -3px;
  bottom: -3px;
  width: 4px;
  height: 4px;
  background: #222;
  border: 1px solid #fff;
`;
const AutoFill = styled.button`
  position: absolute;
  right: -18px;
  bottom: -18px;
  display: grid;
  place-items: center;
  width: 16px;
  height: 16px;
  background: #f7f8f0;
  border: 1px solid #d6dbb4;
`;
const Pointer = styled.span`
  position: absolute;
  left: 654px;
  top: 450px;
`;

const VScroll = styled.div`
  display: flex;
  flex-direction: column;
  width: 16px;
  padding-right: 2px;
  background: #dfe3e8;
  border-left: 1px solid #b4b9c0;
`;
const VSplit = styled.span`
  height: 7px;
  background: #fff;
  border: 1px solid #8f959d;
`;
const VButton = styled.button`
  display: grid;
  place-items: center;
  height: 14px;
`;
const VTrack = styled.div`
  flex: 1;
  padding-top: 14px;
`;
const VThumb = styled.div`
  display: grid;
  place-items: center;
  height: 100%;
  background: linear-gradient(90deg, #f7f8fa, #dde1e6);
  border: 1px solid #a9afb7;
`;
const Grip = styled.span`
  width: 6px;
  height: ${({ $tall }) => ($tall ? 6 : 5)}px;
  background: #b7bcc3;
`;

const SheetRow = styled.div`
  display: flex;
  align-items: stretch;
  flex: none;
  height: 14px;
  background: #dfe3e9;
  border-top: 1px solid #b0b5bc;
  border-bottom: 1px solid #8f959c;
  overflow: hidden;

  button {
    height: 12px;
  }
`;
const SheetNav = styled.div`
  display: flex;
  padding: 0 2px;
  border-right: 1px solid #b0b5bc;
`;
const SheetTab = styled.button`
  width: ${({ $on }) => ($on ? 45 : 41)}px;
  font-size: 10px;
  line-height: 12px;
  font-weight: ${({ $on }) => ($on ? 700 : 400)};
  background: ${({ $on }) => ($on ? "#fff" : "transparent")};
`;
const Slash = styled.span`
  width: 1px;
  margin: 0 2px;
  background: #aab0b8;
  transform: skewX(-35deg);
`;
const HScroll = styled.div`
  display: flex;
  flex: none;
  width: 522px;
  margin-left: auto;
  padding-right: 16px;
`;
const Splitter = styled.span`
  flex: none;
  width: 6px;
  background: #fff;
  border: 1px solid #8f959d;
`;
const HTrack = styled.div`
  flex: 1;
  padding-right: 20px;
`;
const HThumb = styled.div`
  display: grid;
  place-items: center;
  height: 100%;
  background: linear-gradient(#f7f8fa, #dde1e6);
  border: 1px solid #a9afb7;
`;

const StatusRow = styled.footer`
  display: flex;
  align-items: center;
  flex: none;
  height: 17px;
  padding: 0 2px 0 5px;
  background: linear-gradient(#e6e9ec, #c5cacf);
  color: #4a4f56;
`;
const StatusText = styled.span`
  white-space: nowrap;
`;
const StatusRight = styled.div`
  display: flex;
  align-items: center;
  gap: 6px;
  margin-left: auto;
`;
const Stats = styled.div`
  display: flex;
  gap: 9px;
`;
const Views = styled.div`
  display: flex;
  padding-left: 3px;
  border-left: 1px solid #b0b5bc;

  button {
    height: 15px;
  }
`;
const ZoomBox = styled.div`
  display: flex;
  align-items: center;
`;
const RoundButton = styled.button`
  display: grid;
  place-items: center;
  width: 13px;
  height: 13px;
  background: #f4f5f7;
  border: 1px solid #7c828a;
  border-radius: 50%;
`;
const ZoomSlider = styled.input`
  width: 84px;
  height: 13px;
  appearance: none;

  &::-webkit-slider-runnable-track {
    height: 1px;
    background: #8f959d;
  }
  &::-webkit-slider-thumb {
    appearance: none;
    width: 7px;
    height: 10px;
    margin-top: -5px;
    background: #f4f5f7;
    border: 1px solid #6f757d;
    border-radius: 1px 1px 3px 3px;
  }
`;
